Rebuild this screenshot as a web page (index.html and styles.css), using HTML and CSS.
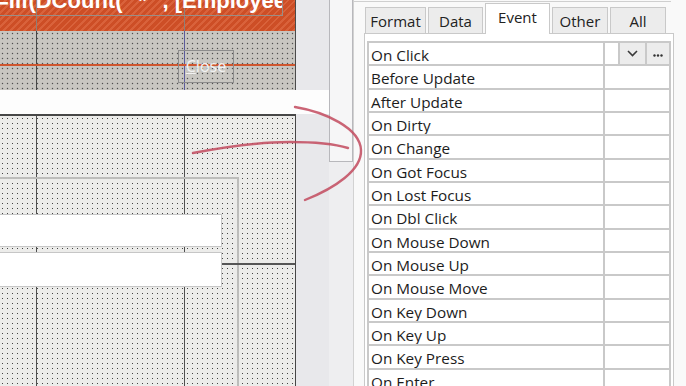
FILE: index.html
```html
<!DOCTYPE html>
<html>
<head>
<meta charset="utf-8">
<link rel="stylesheet" href="styles.css">
</head>
<body>
<div class="screen">
  <div class="designer">
    <div class="upper">
      <div class="canvas-top">
        <div class="hdr">
          <div class="hdr-field"><span class="hdr-text">=IIf(DCount(<span class="q">"*"</span>, [Employees]</span></div>
        </div>
        <div class="band band-a"></div>
        <div class="band-line"></div>
        <div class="band band-b"></div>
        <div class="close-btn"><u>C</u>lose</div>
      </div>
      <div class="gutter"></div>
    </div>
    <div class="section-bar"></div>
    <div class="lower">
      <div class="canvas-bottom">
        <div class="ctl-frame"></div>
        <div class="ctl-text ctl-text-1"></div>
        <div class="ctl-text ctl-text-2"></div>
        <div class="ctl-rule"></div>
      </div>
      <div class="gutter"></div>
    </div>
  </div>
  <div class="side">
    <div class="side-box"></div>
  </div>
  <div class="sheet">
    <div class="sheet-top"></div>
    <div class="tabs">
      <div class="tab tab-format">Format</div>
      <div class="tab tab-data">Data</div>
      <div class="tab tab-event active">Event</div>
      <div class="tab tab-other">Other</div>
      <div class="tab tab-all">All</div>
    </div>
    <div class="tab-panel">
      <div class="prop-grid">
        <div class="label">On Click</div>
        <div class="value value-click">
          <div class="blank"></div>
          <div class="btn btn-drop"><svg width="11" height="7" viewBox="0 0 11 7"><polyline points="1,1 5.5,5.5 10,1" fill="none" stroke="#3a3a3a" stroke-width="1.6"/></svg></div>
          <div class="btn btn-build"><svg width="10" height="3" viewBox="0 0 10 3"><circle cx="1.5" cy="1.5" r="1.2" fill="#333"/><circle cx="5" cy="1.5" r="1.2" fill="#333"/><circle cx="8.5" cy="1.5" r="1.2" fill="#333"/></svg></div>
        </div>
        <div class="label">Before Update</div><div class="value"></div>
        <div class="label">After Update</div><div class="value"></div>
        <div class="label">On Dirty</div><div class="value"></div>
        <div class="label">On Change</div><div class="value"></div>
        <div class="label">On Got Focus</div><div class="value"></div>
        <div class="label">On Lost Focus</div><div class="value"></div>
        <div class="label">On Dbl Click</div><div class="value"></div>
        <div class="label">On Mouse Down</div><div class="value"></div>
        <div class="label">On Mouse Up</div><div class="value"></div>
        <div class="label">On Mouse Move</div><div class="value"></div>
        <div class="label">On Key Down</div><div class="value"></div>
        <div class="label">On Key Up</div><div class="value"></div>
        <div class="label">On Key Press</div><div class="value"></div>
        <div class="label">On Enter</div><div class="value"></div>
      </div>
    </div>
  </div>
  <svg class="ink" width="686" height="386" viewBox="0 0 686 386">
    <path d="M295,107 C325,112 360,128 361,150 C362,170 335,188 305,200" fill="none" stroke="#c24a5e" stroke-width="2.4" stroke-linecap="round" opacity="0.85"/>
    <path d="M193,153 C230,146 260,142 290,142 C318,142 338,145 348,148" fill="none" stroke="#c24a5e" stroke-width="2.4" stroke-linecap="round" opacity="0.85"/>
  </svg>
</div>
</body>
</html>
```
FILE: styles.css
```css
* { box-sizing: border-box; }
html, body { margin: 0; padding: 0; }
body {
  width: 686px;
  height: 386px;
  overflow: hidden;
  background: #f8f8f8;
  font-family: "Open Sans", "Noto Sans", sans-serif;
  color: #1e1e1e;
}
.screen {
  position: relative;
  display: flex;
  width: 686px;
  height: 386px;
  overflow: hidden;
}

/* ---------- form designer ---------- */
.designer {
  width: 329px;
  flex: none;
  display: flex;
  flex-direction: column;
}
.upper {
  display: flex;
  height: 90px;
  flex: none;
}
.canvas-top {
  position: relative;
  width: 296px;
  flex: none;
  display: flex;
  flex-direction: column;
  border-right: 1px solid #4a4a4a;
}
.hdr {
  height: 31px;
  overflow: hidden;
  background:
    linear-gradient(to right, transparent 36px, #8d7f78 36px, #8d7f78 37px, transparent 37px),
    linear-gradient(to right, transparent 184px, #8d7f78 184px, #8d7f78 185px, transparent 185px),
    repeating-linear-gradient(135deg, #cd4e26 0 3px, #d9623b 3px 5px);
}
.hdr-field {
  width: 283px;
  height: 16px;
  overflow: hidden;
  border-right: 1px solid #9a8d86;
  border-bottom: 1px solid #9a8d86;
}
.hdr-text {
  display: block;
  margin-top: -12px;
  margin-left: -4px;
  white-space: nowrap;
  color: #fff;
  font-family: "Liberation Sans", Arial, sans-serif;
  font-weight: bold;
  font-size: 22px;
  line-height: 26px;
}
.hdr-text .q {
  display: inline-block;
  width: 40px;
  text-align: center;
}
.band {
  background:
    linear-gradient(to right, transparent 36px, #474747 36px, #474747 37px, transparent 37px),
    linear-gradient(to right, transparent 184px, #5b5b9c 184px, #5b5b9c 185px, transparent 185px),
    radial-gradient(circle at 2.5px 2.5px, #505050 0.65px, transparent 1.05px) 0 0 / 5px 5px,
    #c8c6c1;
}
.band-a { height: 33px; }
.band-line { height: 2px; background: #cf5730; }
.band-b { height: 24px; }
.close-btn {
  position: absolute;
  left: 178px;
  top: 50px;
  width: 56px;
  height: 33px;
  border: 1px solid #8c8c8c;
  color: #f2f2f2;
  font-family: "Noto Sans", sans-serif;
  font-size: 16px;
  line-height: 31px;
  text-align: center;
}
.gutter {
  flex: 1;
  background: #e8e8eb;
}
.section-bar {
  height: 24px;
  flex: none;
  background: #fdfdfd;
}
.lower {
  flex: 1;
  display: flex;
}
.canvas-bottom {
  position: relative;
  width: 296px;
  flex: none;
  border-top: 2px solid #474747;
  border-right: 1px solid #474747;
  background:
    linear-gradient(to right, transparent 36px, #505050 36px, #505050 37.5px, transparent 37.5px),
    linear-gradient(to right, transparent 184px, #505050 184px, #505050 185.5px, transparent 185.5px),
    radial-gradient(circle at 2.5px 2.5px, #444 0.6px, transparent 1px) 0 0 / 5px 5px,
    #ececea;
}
.ctl-frame {
  position: absolute;
  left: 0;
  top: 61px;
  width: 239px;
  bottom: 0;
  border-top: 2px solid #bdbdbb;
  border-right: 2px solid #bdbdbb;
}
.ctl-text {
  position: absolute;
  left: 0;
  width: 222px;
  background: #fff;
  border: 1px solid #c6c6c6;
  border-left: none;
}
.ctl-text-1 { top: 98px; height: 33px; }
.ctl-text-2 { top: 136px; height: 35px; }
.ctl-rule {
  position: absolute;
  left: 222px;
  top: 147px;
  width: 73px;
  height: 2px;
  background: #555;
}

/* ---------- side box ---------- */
.side {
  width: 24px;
  flex: none;
  display: flex;
  flex-direction: column;
  background: #eeeef0;
}
.side-box {
  height: 162px;
  border-left: 1px solid #b8b8bc;
  border-right: 1px solid #b8b8bc;
  border-bottom: 1px solid #b8b8bc;
  background: #f6f6f7;
}

/* ---------- property sheet ---------- */
.sheet {
  flex: 1;
  display: flex;
  flex-direction: column;
  border-left: 1px solid #d2d2d2;
  background: #f9f9f9;
  padding: 0 12px 0 10px;
}
.sheet-top {
  height: 2px;
  flex: none;
  border-bottom: 1px solid #cfcfcf;
  margin-left: -10px;
  margin-right: 3px;
}
.tabs {
  display: flex;
  align-items: flex-end;
  gap: 2px;
  height: 32px;
  flex: none;
  padding-left: 1px;
  margin-bottom: -1px;
}
.tab {
  height: 27px;
  background: #ececec;
  border: 1px solid #c9c9c9;
  border-bottom: none;
  text-align: center;
  font-size: 15px;
  line-height: 26px;
  color: #222;
}
.tab-format { width: 61px; }
.tab-data { width: 55px; }
.tab-event { width: 65px; }
.tab-other { width: 56px; }
.tab-all { width: 56px; }
.tab.active {
  height: 31px;
  background: #fff;
  position: relative;
  z-index: 1;
  line-height: 26px;
}
.tab-panel {
  flex: 1;
  border: 1px solid #c9c9c9;
  border-bottom: none;
  background: #fff;
  padding: 7px 2px 0 2px;
}
.prop-grid {
  display: grid;
  grid-template-columns: 234px 64px;
  grid-auto-rows: 21.33px;
  gap: 2px;
  padding: 2px;
  background: #c9c9c9;
  width: 304px;
}
.label {
  background: #fff;
  padding: 1px 0 0 2px;
  font-size: 15.3px;
  line-height: 22px;
  white-space: nowrap;
  overflow: hidden;
  color: #1c1c1c;
}
.value { background: #fff; }
.value-click {
  display: flex;
  gap: 2px;
  background: #c9c9c9;
}
.blank { width: 13px; background: #fff; }
.btn {
  display: flex;
  align-items: center;
  justify-content: center;
  background: #ececec;
}
.btn-drop { width: 25px; }
.btn-build { flex: 1; padding-top: 3px; }

.ink {
  position: absolute;
  left: 0;
  top: 0;
  pointer-events: none;
}
```
